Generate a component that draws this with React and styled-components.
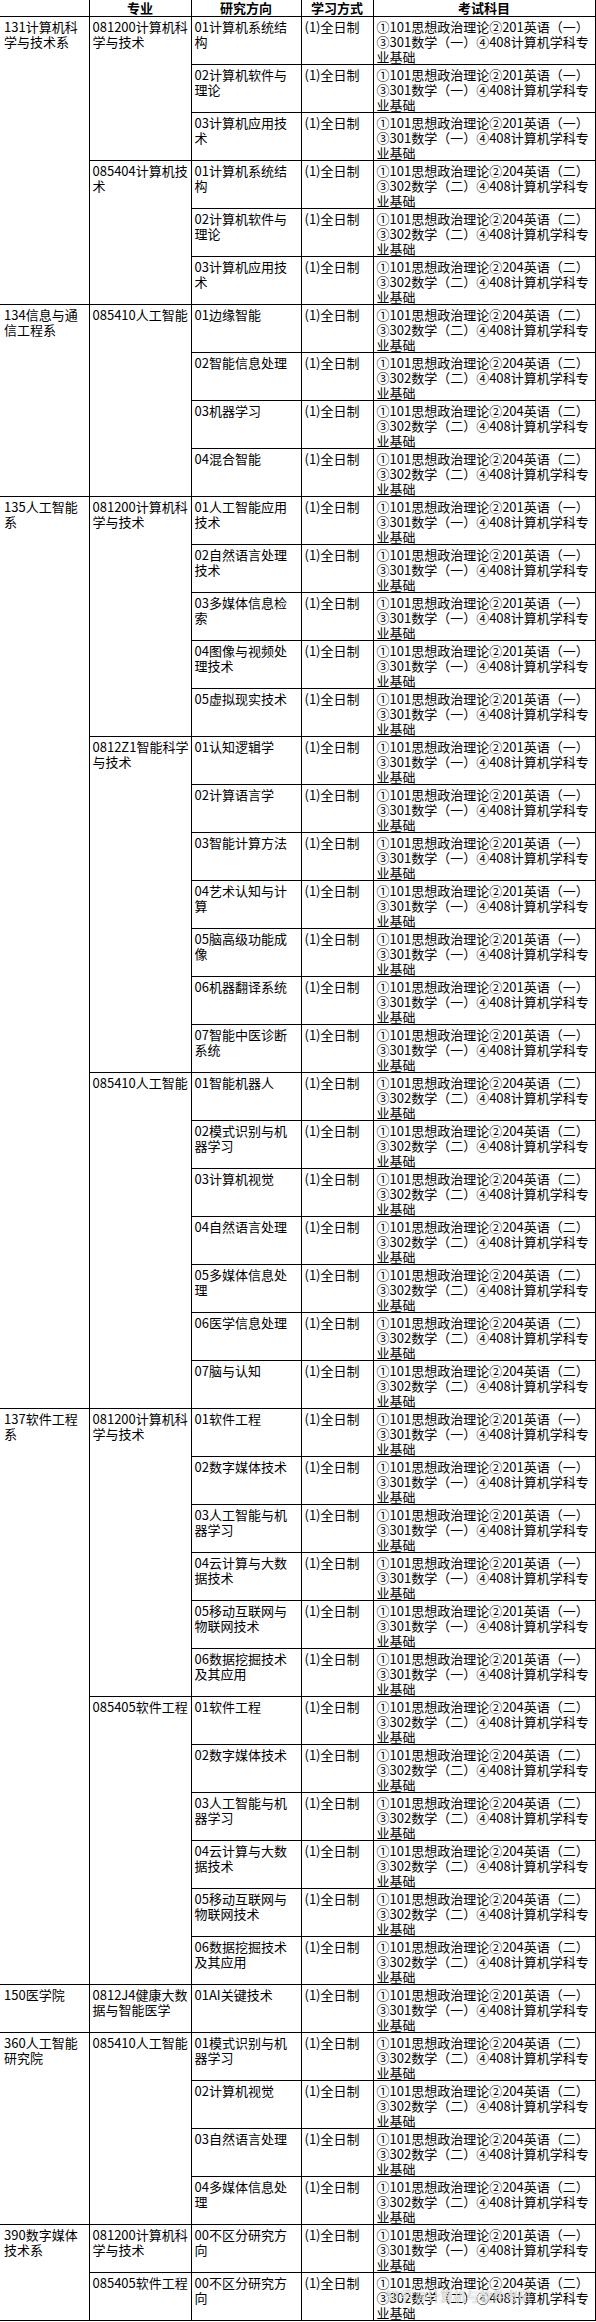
import React from 'react';
import styled, { createGlobalStyle } from 'styled-components';

const GlobalStyle = createGlobalStyle`
  body {
    margin: 0;
    background: #fff;
    color: #000;
    font-family: "Noto Sans CJK SC", "Noto Sans", sans-serif;
  }
`;

const EXAM = {
  1: ['①101思想政治理论②201英语（一）', '③301数学（一）④408计算机学科专', '业基础'],
  2: ['①101思想政治理论②204英语（二）', '③302数学（二）④408计算机学科专', '业基础'],
};

const CS = ['01计算机系统结构', '02计算机软件与理论', '03计算机应用技术'];
const SE = [
  '01软件工程',
  '02数字媒体技术',
  '03人工智能与机器学习',
  '04云计算与大数据技术',
  '05移动互联网与物联网技术',
  '06数据挖掘技术及其应用',
];

const depts = [
  {
    name: '131计算机科学与技术系',
    majors: [
      { name: '081200计算机科学与技术', exam: 1, dirs: CS },
      { name: '085404计算机技术', exam: 2, dirs: CS },
    ],
  },
  {
    name: '134信息与通信工程系',
    majors: [
      { name: '085410人工智能', exam: 2, dirs: ['01边缘智能', '02智能信息处理', '03机器学习', '04混合智能'] },
    ],
  },
  {
    name: '135人工智能系',
    majors: [
      {
        name: '081200计算机科学与技术',
        exam: 1,
        dirs: ['01人工智能应用技术', '02自然语言处理技术', '03多媒体信息检索', '04图像与视频处理技术', '05虚拟现实技术'],
      },
      {
        name: '0812Z1智能科学与技术',
        exam: 1,
        dirs: [
          '01认知逻辑学',
          '02计算语言学',
          '03智能计算方法',
          '04艺术认知与计算',
          '05脑高级功能成像',
          '06机器翻译系统',
          '07智能中医诊断系统',
        ],
      },
      {
        name: '085410人工智能',
        exam: 2,
        dirs: [
          '01智能机器人',
          '02模式识别与机器学习',
          '03计算机视觉',
          '04自然语言处理',
          '05多媒体信息处理',
          '06医学信息处理',
          '07脑与认知',
        ],
      },
    ],
  },
  {
    name: '137软件工程系',
    majors: [
      { name: '081200计算机科学与技术', exam: 1, dirs: SE },
      { name: '085405软件工程', exam: 2, dirs: SE },
    ],
  },
  {
    name: '150医学院',
    majors: [{ name: '0812J4健康大数据与智能医学', exam: 1, dirs: ['01AI关键技术'] }],
  },
  {
    name: '360人工智能研究院',
    majors: [
      {
        name: '085410人工智能',
        exam: 2,
        dirs: ['01模式识别与机器学习', '02计算机视觉', '03自然语言处理', '04多媒体信息处理'],
      },
    ],
  },
  {
    name: '390数字媒体技术系',
    majors: [
      { name: '081200计算机科学与技术', exam: 1, dirs: ['00不区分研究方向'] },
      { name: '085405软件工程', exam: 2, dirs: ['00不区分研究方向'] },
    ],
  },
];

// the cells wrap at a fixed count of characters in the source sheet
const split = (text, n) => [text.slice(0, n), text.slice(n)].filter(Boolean);

const Page = styled.div`
  position: relative;
  width: 596px;
`;

const Table = styled.table`
  width: 595px;
  border-collapse: collapse;
  table-layout: fixed;
  font-size: 13px;
  line-height: 15px;
`;

const HeadCell = styled.th`
  height: 16px;
  padding: 0;
  font-weight: bold;
  text-align: center;
  vertical-align: top;
  border-left: 1px solid #000;
  border-right: 1px solid #000;
  border-bottom: 1px solid #000;
  &:first-child {
    border-left: none;
  }
`;

const Row = styled.tr`
  height: 48px;
`;

const Cell = styled.td`
  padding: ${(p) => (p.$first ? '2px 1px 0 4px' : '2px 1px 0 3px')};
  vertical-align: top;
  border: 1px solid #000;
  border-left: ${(p) => (p.$first ? 'none' : '1px solid #000')};
  overflow: hidden;
`;

const Line = styled.span`
  display: block;
  height: 15px;
  white-space: nowrap;
`;

const Watermark = styled.div`
  position: absolute;
  left: 386px;
  top: 2288px;
  font-size: 13px;
  line-height: 15px;
  white-space: nowrap;
  color: rgba(255, 255, 255, 0.85);
  text-shadow: 0 0 1px rgba(0, 0, 0, 0.55);
  pointer-events: none;
`;

const Lines = ({ items }) => items.map((t, i) => <Line key={i}>{t}</Line>);

export default function App() {
  const rows = [];
  depts.forEach((d) => {
    const total = d.majors.reduce((s, m) => s + m.dirs.length, 0);
    d.majors.forEach((m, mi) => {
      m.dirs.forEach((dir, di) => {
        rows.push(
          <Row key={`${d.name}-${m.name}-${dir}`}>
            {mi === 0 && di === 0 && (
              <Cell $first rowSpan={total}>
                <Lines items={split(d.name, 7)} />
              </Cell>
            )}
            {di === 0 && (
              <Cell rowSpan={m.dirs.length}>
                <Lines items={split(m.name, 10)} />
              </Cell>
            )}
            <Cell>
              <Lines items={split(dir, 8)} />
            </Cell>
            <Cell>(1)全日制</Cell>
            <Cell>
              <Lines items={EXAM[m.exam]} />
            </Cell>
          </Row>
        );
      });
    });
  });

  return (
    <Page>
      <GlobalStyle />
      <Table>
        <colgroup>
          <col style={{ width: 89 }} />
          <col style={{ width: 102 }} />
          <col style={{ width: 110 }} />
          <col style={{ width: 72 }} />
          <col style={{ width: 222 }} />
        </colgroup>
        <thead>
          <tr>
            <HeadCell />
            <HeadCell>专业</HeadCell>
            <HeadCell>研究方向</HeadCell>
            <HeadCell>学习方式</HeadCell>
            <HeadCell>考试科目</HeadCell>
          </tr>
        </thead>
        <tbody>{rows}</tbody>
      </Table>
      <Watermark>知乎 @计算机与软件考研</Watermark>
    </Page>
  );
}
